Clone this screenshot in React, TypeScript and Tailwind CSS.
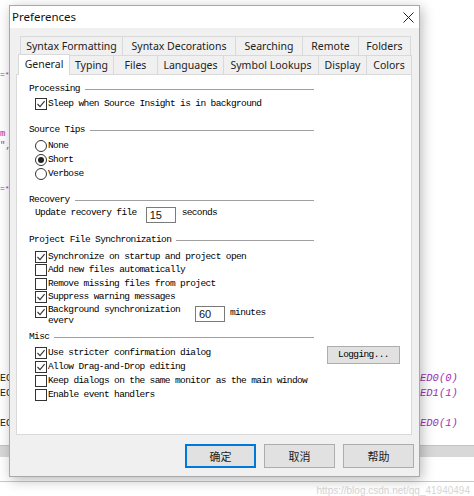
import React from "react";

const MONO = "font-['Liberation_Mono',monospace] text-[9.5px] tracking-[-0.62px] text-black whitespace-nowrap";
const UI = "font-['Noto_Sans',sans-serif]";

function Box({ checked }: { checked?: boolean }) {
  return (
    <span className="w-[12px] h-[12px] shrink-0 border border-[#333] bg-white flex items-center justify-center">
      {checked && (
        <svg width="10" height="10" viewBox="0 0 10 10">
          <polyline points="1.5,5 4,7.6 8.6,2.2" fill="none" stroke="#333" strokeWidth="1.1" />
        </svg>
      )}
    </span>
  );
}

function Radio({ checked }: { checked?: boolean }) {
  return (
    <span className="w-[12px] h-[12px] shrink-0 rounded-full border border-[#333] bg-white flex items-center justify-center">
      {checked && <span className="w-[6px] h-[6px] rounded-full bg-[#222]" />}
    </span>
  );
}

function CheckRow({ checked, label, h = "h-[14px]" }: { checked?: boolean; label: string; h?: string }) {
  return (
    <div className={`flex items-center pl-[18px] gap-[1px] ${h}`}>
      <Box checked={checked} />
      <span className={MONO}>{label}</span>
    </div>
  );
}

function RadioRow({ checked, label }: { checked?: boolean; label: string }) {
  return (
    <div className="flex items-center pl-[18px] gap-[1px] h-[14px]">
      <Radio checked={checked} />
      <span className={MONO}>{label}</span>
    </div>
  );
}

function Header({ label, cls = "" }: { label: string; cls?: string }) {
  return (
    <div className={`flex items-center h-[14px] pl-[12px] w-[297px] ${cls}`}>
      <span className={MONO}>{label}</span>
      <div className="ml-[5px] flex-1 border-t border-[#a0a0a0]" />
    </div>
  );
}

function Tab({ label, w, selected }: { label: string; w: string; selected?: boolean }) {
  return (
    <div
      className={`${w} ${UI} text-[10.5px] text-[#222] flex items-center justify-center border-l border-t border-r border-[#d9d9d9] ${
        selected ? "bg-white h-[21px] -mb-[1px] relative z-10 -mr-[1px]" : "bg-[#f0f0f0] h-[19px] -mr-[1px] pt-[1px]"
      }`}
    >
      {label}
    </div>
  );
}

function Btn({ label, primary }: { label: string; primary?: boolean }) {
  return (
    <div
      className={`w-[71px] h-[24px] bg-[#e1e1e1] flex items-center justify-center font-['Noto_Sans_CJK_SC',sans-serif] text-[11px] text-[#222] ${
        primary ? "border-2 border-[#0078d7]" : "border border-[#adadad]"
      }`}
    >
      {label}
    </div>
  );
}

function Input({ value, w = "w-[30px]" }: { value: string; w?: string }) {
  return (
    <div className={`${w} h-[16px] border border-[#7a7a7a] bg-white flex items-center pl-[3px] font-['Liberation_Sans',sans-serif] text-[11px] text-[#111]`}>
      {value}
    </div>
  );
}

export default function App() {
  const purple = "text-[#a12fb5] font-['Liberation_Mono',monospace] italic text-[10.5px]";
  return (
    <div className="relative w-[474px] h-[496px] overflow-hidden bg-white">
      {/* background editor */}
      <div className="flex flex-col">
        <div className="h-[445px] flex flex-col">
          <div className="mt-[70px] h-[10px] text-[8px] leading-[10px] text-[#a12fb5] font-['Liberation_Mono',monospace]">=*</div>
          <div className="mt-[48px] h-[12px] text-[9px] leading-[12px] text-[#a12fb5] font-['Liberation_Mono',monospace]">m</div>
          <div className="h-[12px] text-[9px] leading-[12px] text-[#a12fb5] font-['Liberation_Mono',monospace]">",</div>
          <div className="mt-[32px] h-[10px] text-[8px] leading-[10px] text-[#a12fb5] font-['Liberation_Mono',monospace]">=*</div>
          <div className="mt-[177px] flex flex-col leading-[15px]">
            {[["EC", "ED0(0)"], ["EC", "ED1(1)"], ["", ""], ["EC", "ED0(1)"]].map(([l, r], i) => (
              <div key={i} className="flex h-[15px]">
                <span className="w-[420px] text-[10px] font-['Liberation_Mono',monospace] text-[#222]">{l}</span>
                <span className={purple}>{r}</span>
              </div>
            ))}
          </div>
        </div>
        <div className="h-[12px] bg-[#d8d8d8] border-t border-[#c4c4c4]" />
        <div className="h-[24px]" />
        <div className="border-t border-[#c8c8c8]" />
        <div className="flex justify-end pr-[4px] mt-[1px] text-[10px] text-[#d6d6d6] font-['Liberation_Sans',sans-serif]">
          https://blog.csdn.net/qq_41940494
        </div>
      </div>

      {/* dialog window */}
      <div className="absolute left-[9px] top-[5px] w-[411px] h-[472px] border border-[#a8a8a8] bg-[#f0f0f0] shadow-[2px_3px_12px_rgba(0,0,0,0.28)] flex flex-col">
        <div className="h-[22px] bg-white flex items-center justify-between pl-[2px] pr-[5px]">
          <span className={`${UI} text-[11.5px] text-[#111] -mt-[1px]`}>Preferences</span>
          <svg width="11" height="11" viewBox="0 0 11 11">
            <path d="M0.5 0.5 L10.5 10.5 M10.5 0.5 L0.5 10.5" stroke="#222" strokeWidth="1" />
          </svg>
        </div>
        <div className="flex flex-col pt-[8px]">
          <div className="flex ml-[10px]">
            <Tab label="Syntax Formatting" w="w-[103px]" />
            <Tab label="Syntax Decorations" w="w-[114px]" />
            <Tab label="Searching" w="w-[68px]" />
            <Tab label="Remote" w="w-[57px]" />
            <Tab label="Folders" w="w-[53px]" />
          </div>
          <div className="flex items-end ml-[8px] h-[19px]">
            <Tab label="General" w="w-[52px]" selected />
            <Tab label="Typing" w="w-[45px]" />
            <Tab label="Files" w="w-[45px]" />
            <Tab label="Languages" w="w-[67px]" />
            <Tab label="Symbol Lookups" w="w-[96px]" />
            <Tab label="Display" w="w-[49px]" />
            <Tab label="Colors" w="w-[46px]" />
          </div>
          <div className="ml-[6px] w-[396px] h-[361px] bg-white border border-[#d9d9d9] flex flex-col pt-[7px]">
            <Header label="Processing" />
            <CheckRow checked label="Sleep when Source Insight is in background" h="h-[14px] mt-[1px]" />

            <Header label="Source Tips" cls="mt-[12px]" />
            <div className="mt-[2px]" />
            <RadioRow label="None" />
            <RadioRow checked label="Short" />
            <RadioRow label="Verbose" />

            <Header label="Recovery" cls="mt-[12px]" />
            <div className="flex items-center pl-[18px] h-[16px]">
              <span className={`${MONO} mb-[3px]`}>Update recovery file</span>
              <div className="ml-[9px]"><Input value="15" /></div>
              <span className={`${MONO} ml-[6px] mb-[3px]`}>seconds</span>
            </div>

            <Header label="Project File Synchronization" cls="mt-[10px]" />
            <div className="mt-[3px]" />
            <CheckRow checked label="Synchronize on startup and project open" h="h-[13.5px]" />
            <CheckRow label="Add new files automatically" h="h-[13.5px]" />
            <CheckRow label="Remove missing files from project" h="h-[13.5px]" />
            <CheckRow checked label="Suppress warning messages" h="h-[13.5px]" />
            <div className="flex items-start pl-[18px] h-[19px]">
              <div className="mt-[2px]"><Box checked /></div>
              <div className="ml-[1px] w-[140px] h-[19px] overflow-hidden font-['Liberation_Mono',monospace] text-[9.5px] tracking-[-0.62px] text-black leading-[11px]">
                Background synchronization every
              </div>
              <div className="ml-[7px] mt-[2px]"><Input value="60" /></div>
              <span className={`${MONO} ml-[5px] mt-[2px]`}>minutes</span>
            </div>

            <Header label="Misc" cls="mt-[7px]" />
            <div className="flex items-start mt-[2px]">
              <div className="w-[310px] flex flex-col">
                <CheckRow checked label="Use stricter confirmation dialog" />
                <CheckRow checked label="Allow Drag-and-Drop editing" />
                <CheckRow label="Keep dialogs on the same monitor as the main window" />
                <CheckRow label="Enable event handlers" />
              </div>
              <div className={`w-[73px] h-[18px] bg-[#e1e1e1] border border-[#adadad] flex items-center justify-center ${MONO}`}>
                Logging...
              </div>
            </div>
          </div>
          <div className="flex justify-end gap-[8px] pr-[5px] mt-[9px]">
            <Btn label="确定" primary />
            <Btn label="取消" />
            <Btn label="帮助" />
          </div>
        </div>
      </div>
    </div>
  );
}
